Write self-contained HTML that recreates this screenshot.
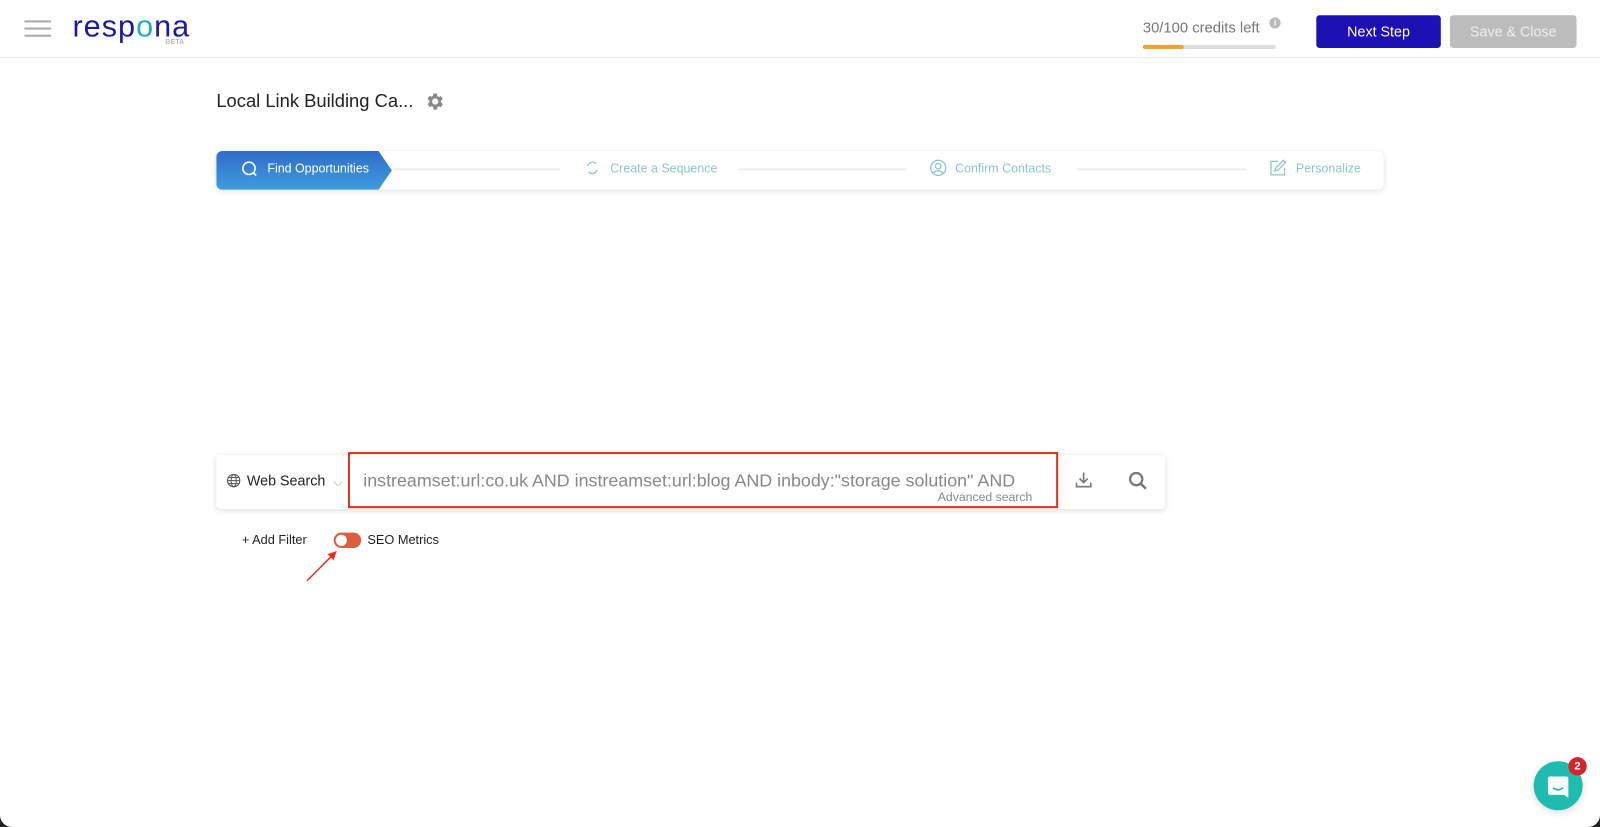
<!DOCTYPE html>
<html><head><meta charset="utf-8"><style>
*{margin:0;padding:0;box-sizing:border-box}
html,body{width:1600px;height:827px;overflow:hidden;background:#222}
.page{position:absolute;left:0;top:0;width:1600px;height:827px;background:#fff;border-radius:0 0 12px 12px;font-family:"Liberation Sans",sans-serif;overflow:hidden}
.wrap{position:absolute;left:0;top:0;width:1568px;height:810px;transform:scale(1.0204);transform-origin:0 0}
.hdr{position:absolute;left:0;top:0;width:1568px;height:57px;border-bottom:1px solid #ececec}
.abs{position:absolute}
</style></head><body><div class="page"><div class="wrap">
<div class="hdr">
 <div class="abs" style="left:24px;top:20px;width:26px;height:2px;background:#aaa"></div>
 <div class="abs" style="left:24px;top:27px;width:26px;height:2px;background:#aaa"></div>
 <div class="abs" style="left:24px;top:34px;width:26px;height:2px;background:#aaa"></div>
 <div class="abs" style="left:71px;top:9px;font-size:30px;color:#1a1aa8;letter-spacing:1px;line-height:36px">resp<span style="color:#1db5b0">o</span>na</div>
 <div class="abs" style="left:162px;top:38px;font-size:7px;color:#bbb;font-weight:bold">BETA</div>
 <div class="abs" style="left:1120px;top:20px;font-size:14.5px;color:#777">30/100 credits left</div>
 <div class="abs" style="left:1244px;top:17px;width:11px;height:11px;border-radius:50%;background:#bbb;color:#fff;font-size:8px;text-align:center;line-height:11px;font-weight:bold">i</div>
 <div class="abs" style="left:1120px;top:44px;width:130px;height:4px;border-radius:2px;background:#ddd"><div style="width:40px;height:4px;border-radius:2px;background:#e8a33c"></div></div>
 <div class="abs" style="left:1290px;top:15px;width:122px;height:32px;border-radius:3px;background:#1c12b4;color:#fff;font-size:14px;text-align:center;line-height:32px">Next Step</div>
 <div class="abs" style="left:1421px;top:15px;width:124px;height:32px;border-radius:3px;background:#bcbcbc;color:#eee;font-size:14px;text-align:center;line-height:32px">Save &amp; Close</div>
</div>
<div class="abs" style="left:212px;top:89px;font-size:18px;color:#222">Local Link Building Ca...</div>
<svg class="abs" style="left:416px;top:89px" width="21" height="21" viewBox="0 0 24 24"><path fill="#888" d="M19.4 13a7.5 7.5 0 000-2l2.1-1.6-2-3.5-2.5 1a7 7 0 00-1.7-1L15 3h-4l-.4 2.7a7 7 0 00-1.7 1l-2.5-1-2 3.5L6.6 11a7.5 7.5 0 000 2l-2.1 1.6 2 3.5 2.5-1a7 7 0 001.7 1L11 21h4l.4-2.7a7 7 0 001.7-1l2.5 1 2-3.5zM13 15.5a3.5 3.5 0 110-7 3.5 3.5 0 010 7z" transform="translate(-1 0)"/></svg>
<div class="abs" style="left:212px;top:148px;width:1144px;height:38px;border-radius:6px;box-shadow:0 1px 5px rgba(0,0,0,.12);background:#fff"></div>
<svg class="abs" style="left:212px;top:148px" width="174" height="38"><defs><linearGradient id="g" x1="0" y1="0" x2="0" y2="1"><stop offset="0" stop-color="#2f6cc9"/><stop offset="1" stop-color="#3f9ddf"/></linearGradient></defs><path d="M6 0H159L172 19L159 38H6A6 6 0 010 32V6A6 6 0 016 0Z" fill="url(#g)"/><circle cx="32" cy="17" r="6" fill="none" stroke="#fff" stroke-width="1.6"/><path d="M36 21l3 3" stroke="#fff" stroke-width="1.8"/></svg>
<div class="abs" style="left:262px;top:158px;font-size:12.2px;color:#fff">Find Opportunities</div>
<div class="abs" style="left:386px;top:165px;width:163px;height:2px;background:#eee"></div>
<div class="abs" style="left:724px;top:165px;width:164px;height:2px;background:#eee"></div>
<div class="abs" style="left:1056px;top:165px;width:166px;height:2px;background:#eee"></div>
<svg class="abs" style="left:573px;top:157px" width="15" height="15" viewBox="0 0 16 16"><path d="M3 6a5.5 5.5 0 019-2.5M13 10a5.5 5.5 0 01-9 2.5" fill="none" stroke="#8cc6cf" stroke-width="1.4"/></svg>
<div class="abs" style="left:598px;top:158px;font-size:12.2px;color:#8cc6cf">Create a Sequence</div>
<svg class="abs" style="left:911px;top:156px" width="17" height="17" viewBox="0 0 16 16"><circle cx="8" cy="8" r="7" fill="none" stroke="#8cc6cf" stroke-width="1.2"/><circle cx="8" cy="6.5" r="2.5" fill="none" stroke="#8cc6cf" stroke-width="1.2"/><path d="M3.5 13a5 4 0 019 0" fill="none" stroke="#8cc6cf" stroke-width="1.2"/></svg>
<div class="abs" style="left:936px;top:158px;font-size:12.2px;color:#8cc6cf">Confirm Contacts</div>
<svg class="abs" style="left:1244px;top:156px" width="17" height="17" viewBox="0 0 16 16"><path d="M8 2H1.5v12.5H14V8" fill="none" stroke="#8cc6cf" stroke-width="1.2"/><path d="M5 11l1-3 7-7 2 2-7 7z" fill="none" stroke="#8cc6cf" stroke-width="1.2"/></svg>
<div class="abs" style="left:1270px;top:158px;font-size:12.2px;color:#8cc6cf">Personalize</div>

<div class="abs" style="left:212px;top:446px;width:930px;height:53px;border-radius:4px;box-shadow:0 1px 5px rgba(0,0,0,.14);background:#fff"></div>
<svg class="abs" style="left:222px;top:464px" width="14" height="14" viewBox="0 0 14 14"><circle cx="7" cy="7" r="6" fill="none" stroke="#555" stroke-width="1.1"/><ellipse cx="7" cy="7" rx="2.5" ry="6" fill="none" stroke="#555" stroke-width="1"/><path d="M1 7h12M2 4h10M2 10h10" stroke="#555" stroke-width="1"/></svg>
<div class="abs" style="left:242px;top:463px;font-size:14px;color:#222">Web Search</div>
<svg class="abs" style="left:326px;top:470px" width="10" height="8"><path d="M1 2l4 4 4-4" fill="none" stroke="#ccc"/></svg>
<div class="abs" style="left:341px;top:443px;width:696px;height:55px;border:2px solid #e8301f"></div>
<div class="abs" style="left:356px;top:461px;width:660px;font-size:17.5px;color:#888;white-space:nowrap;overflow:hidden">instreamset:url:co.uk AND instreamset:url:blog AND inbody:"storage solution" AND</div>
<div class="abs" style="left:919px;top:480px;font-size:12px;color:#888">Advanced search</div>
<svg class="abs" style="left:1052px;top:460px" width="20" height="20" viewBox="0 0 20 20"><path d="M10 3v10M6 9l4 4 4-4M3 13v4h14v-4" fill="none" stroke="#777" stroke-width="1.6"/></svg>
<svg class="abs" style="left:1105px;top:461px" width="20" height="20" viewBox="0 0 20 20"><circle cx="8.5" cy="8.5" r="6" fill="none" stroke="#777" stroke-width="2.2"/><path d="M13 13l5 5" stroke="#777" stroke-width="2.4"/></svg>
<div class="abs" style="left:237px;top:522px;font-size:12.5px;color:#222">+ Add Filter</div>
<div class="abs" style="left:327px;top:522px;width:27px;height:15px;border-radius:8px;background:#d9603a"><div style="position:absolute;left:2px;top:2px;width:11px;height:11px;border-radius:50%;background:#fff"></div></div>
<div class="abs" style="left:360px;top:522px;font-size:12.5px;color:#222">SEO Metrics</div>
<svg class="abs" style="left:298px;top:538px" width="36" height="34"><path d="M3 31L30 4" stroke="#e8301f" stroke-width="1.5"/><path d="M32 2l-9 3 6 6z" fill="#e8301f"/></svg>
<div class="abs" style="left:1503px;top:746px;width:48px;height:48px;border-radius:50%;background:#1ebcae;box-shadow:0 2px 8px rgba(0,0,0,.15)"></div>
<svg class="abs" style="left:1516px;top:760px" width="22" height="22" viewBox="0 0 22 22"><path d="M3 1h16a2 2 0 012 2v19l-4-3H3a2 2 0 01-2-2V3a2 2 0 012-2z" fill="#fff"/><path d="M6 12q5 4 10 0" fill="none" stroke="#1ebcae" stroke-width="1.5"/></svg>
<div class="abs" style="left:1537px;top:742px;width:18px;height:18px;border-radius:50%;background:#d3242b;color:#fff;font-size:11px;font-weight:bold;text-align:center;line-height:18px">2</div>
</div></div></body></html>
